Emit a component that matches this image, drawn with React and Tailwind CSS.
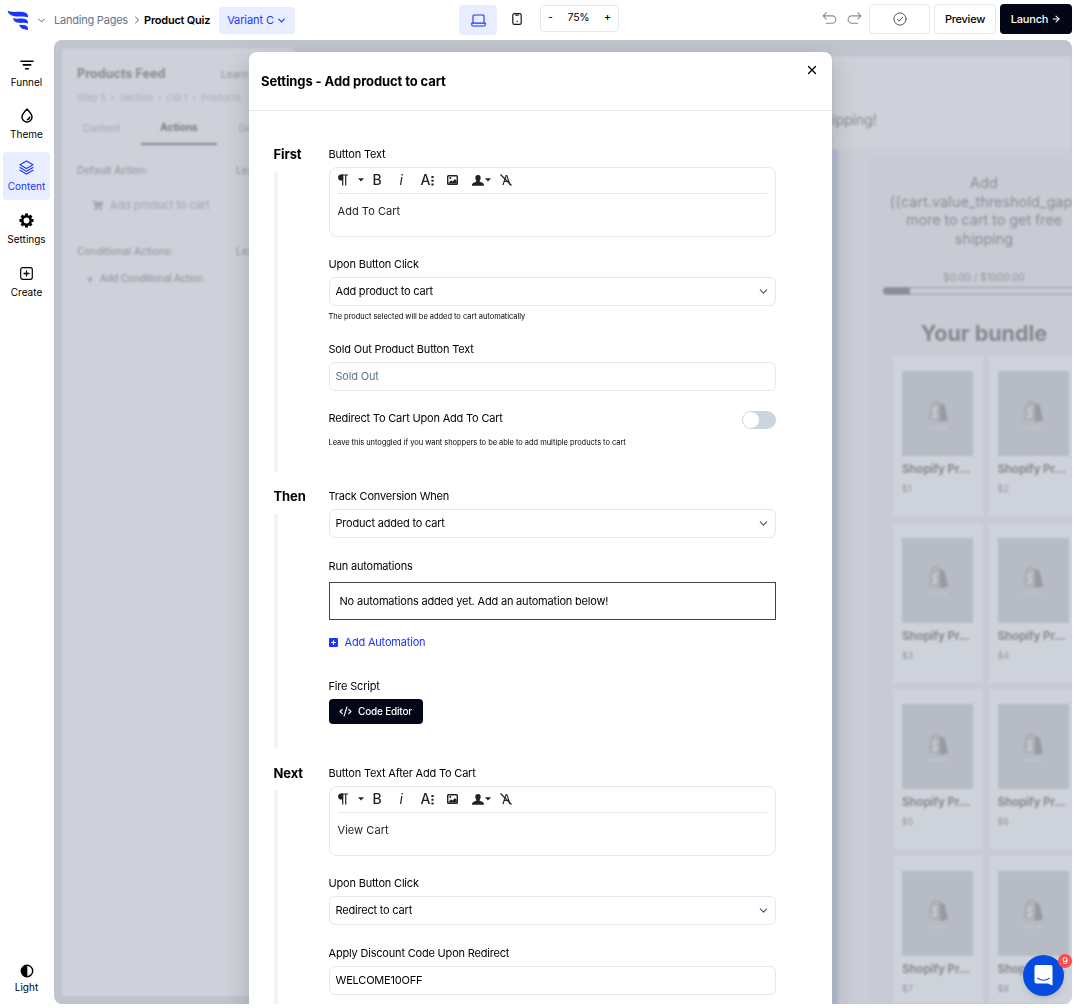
import React from 'react';
import { ChevronDown, ChevronRight, ArrowRight, X, CodeXml } from 'lucide-react';
import { PiArrowUUpLeft, PiArrowUUpRight } from 'react-icons/pi';
import { FaShoppingCart } from 'react-icons/fa';

const Logo = () => (
    <svg width="22" height="21" viewBox="0 0 22 21" fill="#1a35ff">
        <path d="M0.6 0.6C4 2.6 9 1.6 14 1.8C19 2 21.4 4 21 7.2C17 5.6 12 7 7.500 6.300C3.500 5.600 1 3.800 0.600 0.600Z" />
        <path d="M6 8C9 9.200 12 8.300 15.500 8.600C19.500 9 21.400 10.800 21 13.500C18 12 15 13.300 11.500 12.800C8 12.300 6.300 10.500 6 8Z" />
        <path d="M12.300 14.600C14.500 15.400 16 14.800 18 15.200C20.500 15.800 21.400 17.500 21 20.200C19.500 19 18 19.400 16 18.900C13.800 18.300 12.500 16.800 12.300 14.600Z" />
    </svg>
);

const FunnelIcon = () => (
    <svg width="14" height="10" viewBox="0 0 14 10" className="mt-[3px]" stroke="currentColor" strokeWidth="1.600" strokeLinecap="round">
        <path d="M1 1.200H13M3.300 4.900H10.700M5.600 8.700H8.400" />
    </svg>
);

const DropIcon = () => (
    <svg width="12" height="15" viewBox="0 0 12 15" fill="none" stroke="currentColor" strokeWidth="1.500" strokeLinecap="round" strokeLinejoin="round">
        <path d="M6 1C3.500 3.600 1 6.200 1 9A5 5 0 0 0 11 9C11 6.200 8.500 3.600 6 1Z" />
        <path d="M8.700 9.200A2.700 2.700 0 0 1 6.500 11.500" />
    </svg>
);

const LayersIcon = () => (
    <svg width="15" height="15" viewBox="0 0 15 15" fill="none" stroke="currentColor" strokeWidth="1.100" strokeLinecap="round" strokeLinejoin="round">
        <path d="M7.500 1L14 4.700L7.500 8.400L1 4.700Z" />
        <path d="M1 7.500L7.500 11.200L14 7.500M1 10.300L7.500 14L14 10.300" />
    </svg>
);

const GearIcon = () => (
    <svg width="15" height="15" viewBox="0 0 15 15" stroke="currentColor" fill="none">
        <circle cx="7.500" cy="7.500" r="4.200" strokeWidth="2.600" />
        {[0, 45, 90, 135].map((a) => (
            <path key={a} d="M7.500 0.500V2.500M7.500 12.500V14.500" strokeWidth="3" transform={`rotate(${a} 7.5 7.5)`} />
        ))}
    </svg>
);

const CreateIcon = () => (
    <svg width="13" height="13" viewBox="0 0 13 13" fill="none" stroke="currentColor" strokeLinecap="round">
        <rect x="0.700" y="0.700" width="11.600" height="11.600" rx="2" strokeWidth="1.200" />
        <path d="M6.500 4V9M4 6.500H9" strokeWidth="1.300" />
    </svg>
);

const HalfIcon = () => (
    <svg width="14" height="14" viewBox="0 0 14 14">
        <circle cx="7" cy="7" r="5.700" fill="none" stroke="currentColor" strokeWidth="1.400" />
        <path d="M7.300 1A6 6 0 0 0 7.300 13Z" fill="currentColor" />
    </svg>
);

const LaptopIcon = () => (
    <svg width="15" height="13" viewBox="0 0 15 13" fill="none" stroke="currentColor" strokeWidth="1.100" strokeLinejoin="round">
        <path d="M2 9V2Q2 1 3 1H12Q13 1 13 2V9M0.700 9.100H14.300V10.500Q14.300 12 12.800 12H2.200Q0.700 12 0.700 10.500Z" />
    </svg>
);

const PhoneIcon = () => (
    <svg width="10" height="12" viewBox="0 0 10 12" fill="none" stroke="#171717" strokeWidth="1.200">
        <rect x="0.800" y="0.700" width="8.400" height="10.600" rx="1.600" />
        <path d="M3.300 2.200H6.700M4.500 8.300H5.700" />
    </svg>
);

const CheckIcon = () => (
    <svg width="14" height="14" viewBox="0 0 14 14" fill="none" stroke="#555" strokeWidth="1" strokeLinecap="round" strokeLinejoin="round">
        <circle cx="7" cy="7" r="6.100" />
        <path d="M4.300 7.200L6.200 9L9.800 5.200" />
    </svg>
);

const BagIcon = () => (
    <svg width="20" height="23" viewBox="0 0 20 23" fill="none">
        <path d="M1.500 5.500L12 3V22L0 19.500Z" fill="#adb1b9" />
        <path d="M12 3L16.500 5L20 20.500L12 22Z" fill="#969aa2" />
        <path d="M4 5C5 0.500 9.500 0 11.500 4" stroke="#a1a5ad" strokeWidth="1.300" />
        <path d="M9.500 8.500C6.500 7.500 4.500 9.500 6 11.500C7.500 13.200 9 14 8 16C7.200 17.200 5.500 17 4 16" stroke="#cdd0d7" strokeWidth="2" />
    </svg>
);

const Caret = () => (
    <svg width="6" height="4" viewBox="0 0 6 4" fill="#222"><path d="M0 0.300H6L3 3.500Z" /></svg>
);

const navItems = [
    { label: 'Funnel', icon: <FunnelIcon />, box: 'h-[52px]', active: false },
    { label: 'Theme', icon: <DropIcon />, box: 'h-[52px]', active: false },
    { label: 'Content', icon: <LayersIcon />, box: 'h-[53px]', active: true },
    { label: 'Settings', icon: <GearIcon />, box: 'h-[53px]', active: false },
    { label: 'Create', icon: <CreateIcon />, box: 'h-[52px]', active: false },
];

const Header = () => (
    <header className="flex h-10 shrink-0 items-start">
        <div className="flex h-10 w-[459px] items-center pl-[7px]">
            <Logo />
            <ChevronDown size={11} strokeWidth={2} className="ml-[7px] text-slate-600" />
            <span className="ml-[7px] w-[75px] whitespace-nowrap text-[11px] tracking-[-0.22px] text-slate-500">Landing Pages</span>
            <ChevronRight size={12} className="mx-0.5 text-slate-600" />
            <span className="-ml-px w-[67px] whitespace-nowrap text-[11px] font-semibold tracking-[-0.22px] text-black">Product Quiz</span>
            <button className="ml-2 flex h-[27px] w-[76px] items-center justify-center gap-[2px] whitespace-nowrap rounded bg-[#e8edff] text-[11px] tracking-[-0.1px] text-[#1a35ff]">
                Variant C <ChevronDown size={11} strokeWidth={2.6} />
            </button>
        </div>
        <div className="flex items-start pt-[5px]">
            <div className="flex h-[30px] w-[38px] items-center justify-center rounded bg-[#e8edff] text-[#1a35ff]"><LaptopIcon /></div>
            <div className="flex h-7 w-[39px] items-center justify-center"><PhoneIcon /></div>
            <div className="ml-1 flex h-[27px] w-[79px] items-center justify-between rounded border border-slate-200 px-[7px] pb-px text-[10.5px] text-black">
                <span>-</span><span className="tracking-[-0.3px]">75%</span><span className="font-medium">+</span>
            </div>
        </div>
        <div className="ml-auto flex items-start pr-2 pt-1">
            <div className="mr-1.5 flex h-7 items-center gap-2 text-[#8b8b8b]">
                <PiArrowUUpLeft size={17} />
                <PiArrowUUpRight size={17} />
            </div>
            <div className="flex h-[30px] w-[61px] items-center justify-center rounded border border-slate-200"><CheckIcon /></div>
            <button className="ml-1 flex h-[30px] w-[62px] items-center justify-center rounded border border-slate-200 text-[11px] font-medium tracking-[-0.25px] text-black">Preview</button>
            <button className="ml-1 flex h-[30px] w-[72px] items-center justify-center gap-[3px] rounded bg-[#020617] text-[11px] font-medium tracking-[-0.2px] text-white">
                Launch <ArrowRight size={10} strokeWidth={2.6} />
            </button>
        </div>
    </header>
);

const Sidebar = () => (
    <nav className="flex w-[54px] shrink-0 flex-col items-center pr-px pt-2">
        {navItems.map((item) => (
            <div key={item.label} className={`${item.box} flex shrink-0 flex-col items-center`}>
                <div className={`flex h-12 w-[47px] flex-col items-center rounded pt-2 text-[10px] ${item.active ? 'bg-[#e8edff] text-[#1a35ff]' : 'text-black'}`}>
                    <span className="flex h-[15px] items-center justify-center">{item.icon}</span>
                    <span className="mt-1 leading-[15px]">{item.label}</span>
                </div>
            </div>
        ))}
        <div className="mb-[9px] mt-auto flex flex-col items-center text-[10px] text-black">
            <HalfIcon />
            <span className="mt-px leading-4">Light</span>
        </div>
    </nav>
);

const FeedPanel = () => (
    <div className="ml-2 mt-2 flex h-[948px] w-[232px] flex-col overflow-hidden rounded bg-[#ced1d9] text-[10px] text-[#969aa2] blur-[1.3px]">
        <div className="flex h-[51px] items-center whitespace-nowrap pl-[15px] pt-0.5">
            <span className="w-36 text-[12.6px] font-bold text-[#85888f]">Products Feed</span>
            <span className="text-[10px] font-medium">Learn More</span>
        </div>
        <div className="-mt-2 flex h-[14px] items-center gap-[4.800px] whitespace-nowrap pl-[15px] text-[9.5px] text-[#a8adb7]">
            <span>Step 5</span><span>›</span><span>Section</span><span>›</span><span>Col 1</span><span>›</span><span>Products</span>
        </div>
        <div className="mt-[6px] flex h-[35px] shrink-0 border-y border-[#c8ccd4] font-medium text-[#a8adb7]">
            <span className="flex w-[79px] items-center justify-center">Content</span>
            <span className="flex w-[76px] items-center justify-center border-b-2 border-[#85888f] font-bold text-[#777b82]">Actions</span>
            <span className="flex w-[77px] items-center justify-center">Design</span>
        </div>
        <div className="mt-4 flex h-4 items-center whitespace-nowrap pl-[15px] font-medium"><span className="w-[159px]">Default Action:</span>Learn</div>
        <div className="ml-[15px] mt-3 flex h-[30px] w-[214px] items-center border border-[#c8ccd4] pl-3.5 text-[11px] tracking-[-0.1px] text-[#a0a5af]">
            <FaShoppingCart size={11} className="mr-[7px]" />Add product to cart
        </div>
        <div className="mt-[23px] flex h-4 items-center whitespace-nowrap pl-[15px] font-medium"><span className="w-[159px]">Conditional Actions:</span>Learn</div>
        <div className="ml-[15px] mt-[7px] flex h-[25px] w-[134px] items-center whitespace-nowrap rounded border border-[#c8ccd4] pl-2 font-medium tracking-[-0.3px]">
            <span className="mr-1.5 text-xs">+</span>Add Conditional Action
        </div>
    </div>
);

const ProductCard = ({ price }) => (
    <div className="h-40 w-[89.5px] shrink-0 bg-[#ced2da] px-[9px] pt-[15px]">
        <div className="flex h-[85px] w-[71px] flex-col items-center justify-center bg-[#b7bbc4]">
            <BagIcon />
            <div className="mt-1 h-px w-[18px] bg-[#c8ccd3]" />
        </div>
        <p className="mt-[5px] whitespace-nowrap text-[11.5px] font-bold leading-4 tracking-[-0.1px] text-[#888b92]">Shopify Pr...</p>
        <p className="mt-1 text-[9px] leading-4 text-[#92969e]">${price}</p>
    </div>
);

const Preview = () => (
    <div className="mt-4 flex h-[948px] w-[240px] shrink-0 flex-col bg-[#ced1d9] blur-[1.2px]">
        <div className="flex h-[93px] items-center pt-[34px] text-[14px] text-[#8a8e95]"><span className="whitespace-nowrap">ipping!</span></div>
        <div className="flex h-[855px] border-l-[6px] border-[#b4bfd8] bg-[#cacdd5] pl-[31px] pt-2">
            <div className="h-[847px] w-[230px] shrink-0 overflow-hidden bg-[#c8cbd3]">
                <div className="h-[110px] pt-[17px] text-center text-[14.5px] leading-[18.5px] text-[#8a8e96]">
                    <p>Add</p>
                    <p className="whitespace-nowrap">{'({cart.value_threshold_gap}'}</p>
                    <p className="tracking-[-0.1px]">more to cart to get free</p>
                    <p>shipping</p>
                </div>
                <p className="h-5 text-center text-[10px] leading-5 text-[#92969e]">$0.00 / $1000.00</p>
                <div className="ml-[14px] h-2 w-[200px] rounded-sm border-y border-[#959aa3] bg-[#c8cbd3]"><div className="h-full w-[27px] rounded-l-sm bg-[#8a8e97]" /></div>
                <p className="h-[61px] pt-[23px] text-center text-[21.5px] font-bold leading-[31px] text-[#858890]">Your bundle</p>
                <div className="ml-6 grid w-[186px] grid-cols-[89.5px_89.5px] gap-x-1.5 gap-y-[6.500px]">
                    {[1, 2, 3, 4, 5, 6, 7, 8].map((p) => <ProductCard key={p} price={p} />)}
                </div>
            </div>
        </div>
    </div>
);

const Toolbar = () => (
    <div className="mx-2 flex h-[26px] shrink-0 items-center border-b border-slate-200 pb-px text-[#222]">
        <svg width="10" height="12" viewBox="0 0 10 12" className="mr-2.5" fill="none" stroke="#222" strokeWidth="1.200">
            <path d="M4.500 1H3.200A2.500 2.500 0 0 0 3.200 6H4.500Z" fill="#222" />
            <path d="M3 1H10M4.700 1V11.500M7.700 1V11.500" />
        </svg>
        <Caret />
        <span className="ml-[9px] w-[27px] text-[14px] font-medium leading-4">B</span>
        <span className="w-[21px] text-[14px] italic leading-4">i</span>
        <span className="text-[14px] font-medium leading-4">A</span>
        <svg width="3" height="11" viewBox="0 0 3 11" className="ml-px mr-[13px]" fill="#222"><path d="M0.400 1H2.600V3H0.400ZM0.400 4.800H2.600V6.800H0.400ZM0.400 8.600H2.600V10.600H0.400Z" /></svg>
        <svg width="11" height="10" viewBox="0 0 11 10" className="mr-3.5">
            <rect x="0.700" y="0.700" width="9.600" height="8.600" rx="0.800" fill="none" stroke="#222" strokeWidth="1.400" />
            <path d="M1.500 8L4 5.200L5.500 6.500L8 4L9.700 6V8.500H1.500Z" fill="#222" />
            <circle cx="3.300" cy="3" r="1" fill="#222" />
        </svg>
        <svg width="12" height="11" viewBox="0 0 11 10" className="mr-px" fill="#222">
            <path d="M5.500 0C7.500 0 8.200 1.400 7.900 3.200C7.700 4.500 7 5 6.900 6C8.500 7 11 7 11 9.700H0C0 7 2.500 7 4.100 6C4 5 3.300 4.500 3.100 3.200C2.800 1.400 3.500 0 5.500 0Z" />
        </svg>
        <Caret />
        <span className="relative ml-[9px] flex h-4 w-3 items-center justify-center text-[13px] leading-4">
            A
            <svg width="12" height="12" viewBox="0 0 12 12" className="absolute left-0 top-0.5" stroke="#222" strokeWidth="1.200"><path d="M0.500 0.500L11.500 11.500" /></svg>
        </span>
    </div>
);

const Editor = ({ text }) => (
    <div className="mt-[5px] flex h-[70px] shrink-0 flex-col rounded-lg border border-slate-200">
        <Toolbar />
        <p className="px-2 pt-[9px] text-[11px] leading-4 tracking-[0.05px] text-[#222]">{text}</p>
    </div>
);

const Select = ({ value }) => (
    <div className="mt-[5px] flex h-[29px] shrink-0 items-center justify-between rounded-md border border-slate-200 px-1.5 text-[11px] tracking-[-0.2px] text-black">
        {value}
        <ChevronDown size={13} strokeWidth={2} className="-mr-px text-slate-600" />
    </div>
);

const Label = ({ children, className = '' }) => (
    <p className={`h-4 shrink-0 whitespace-nowrap text-[11px] leading-4 tracking-[-0.19px] text-black ${className}`}>{children}</p>
);

const Section = ({ title, height, children }) => (
    <section className={`${height} flex shrink-0`}>
        <div className="flex w-[55px] shrink-0 flex-col">
            <h3 className="h-4 text-[13px] font-bold leading-4 tracking-[-0.1px] text-black">{title}</h3>
            <div className="mb-4 mt-[9px] w-1 flex-1 rounded-sm bg-slate-100" />
        </div>
        <div className="flex w-[447.5px] flex-col">{children}</div>
    </section>
);

const SettingsModal = () => (
    <div className="absolute left-[248.5px] top-[52px] flex h-[952px] w-[583px] flex-col overflow-hidden rounded-t-lg bg-white">
        <div className="flex h-[59px] shrink-0 items-center justify-between border-b border-slate-200 pl-[12.5px] pr-[13px]">
            <h2 className="pt-0.5 text-[13px] font-bold tracking-[-0.1px] text-black">Settings - Add product to cart</h2>
            <X size={14} strokeWidth={2.4} className="-mt-[22px] text-black" />
        </div>
        <div className="flex flex-col pl-[25px] pt-[35px]">
            <Section title="First" height="h-[342px]">
                <Label>Button Text</Label>
                <Editor text="Add To Cart" />
                <Label className="mt-[19px]">Upon Button Click</Label>
                <Select value="Add product to cart" />
                <p className="mt-[5px] h-3 text-[7.500px] leading-3 tracking-[-0.04px] text-black">The product selected will be added to cart automatically</p>
                <Label className="mt-[18px]">Sold Out Product Button Text</Label>
                <div className="mt-[5px] flex h-[29px] items-center rounded-md border border-slate-200 px-1.5 text-[11px] tracking-[-0.19px] text-slate-500">Sold Out</div>
                <div className="mt-[19px] flex h-5 items-start justify-between">
                    <Label>Redirect To Cart Upon Add To Cart</Label>
                    <div className="mt-px flex h-[18px] w-[34px] items-center rounded-full bg-slate-300 p-px"><div className="h-4 w-4 rounded-full bg-white" /></div>
                </div>
                <p className="mt-[7px] h-3 text-[7.500px] leading-3 tracking-[-0.04px] text-black">Leave this untoggled if you want shoppers to be able to add multiple products to cart</p>
            </Section>
            <Section title="Then" height="h-[277px]">
                <Label>Track Conversion When</Label>
                <Select value="Product added to cart" />
                <Label className="mt-5">Run automations</Label>
                <div className="mt-2 flex h-[38px] items-center border border-[#444] px-2.5 text-[11px] tracking-[-0.19px] text-black">No automations added yet. Add an automation below!</div>
                <div className="mt-[14px] flex h-4 items-center text-[11px] tracking-[-0.19px] text-[#1a35ff]">
                    <svg width="9" height="9" viewBox="0 0 9 9" className="mr-[7px]"><rect width="9" height="9" rx="1" fill="#1a35ff" /><path d="M4.500 2.200V6.800M2.200 4.500H6.800" stroke="white" strokeWidth="1.100" /></svg>
                    Add Automation
                </div>
                <Label className="mt-7">Fire Script</Label>
                <button className="mt-[5px] flex h-[25px] w-[94px] items-center justify-center gap-1.5 whitespace-nowrap rounded bg-[#020617] text-[10px] font-medium tracking-[-0.2px] text-white">
                    <CodeXml size={13} strokeWidth={2.2} /> Code Editor
                </button>
            </Section>
            <Section title="Next" height="h-[420px]">
                <Label>Button Text After Add To Cart</Label>
                <Editor text="View Cart" />
                <Label className="mt-[19px]">Upon Button Click</Label>
                <Select value="Redirect to cart" />
                <Label className="mt-5">Apply Discount Code Upon Redirect</Label>
                <div className="mt-[5px] flex h-[29px] items-center rounded-md border border-slate-200 px-1.5 text-[11px] tracking-[-0.19px] text-black">WELCOME10OFF</div>
            </Section>
        </div>
    </div>
);

const ChatLauncher = () => (
    <div className="absolute left-[1023px] top-[955px] flex h-[41px] w-[41px] items-center justify-center rounded-full bg-[#064ddf] shadow-md">
        <svg width="19" height="21" viewBox="0 0 19 21">
            <path d="M2.500 0H16.500Q18.500 0 18.500 2V20.500L13.800 18.500H2.500Q0.500 18.500 0.500 16.500V2Q0.500 0 2.500 0Z" fill="white" />
            <path d="M3.700 13.300Q9.500 17.300 15.300 13.300" fill="none" stroke="#064ddf" strokeWidth="1.100" strokeLinecap="round" />
        </svg>
        <span className="absolute -right-2 -top-px flex h-[14px] w-[14px] items-center justify-center rounded-full bg-[#ff4b4b] text-[9px] font-medium text-white">9</span>
    </div>
);

const App = () => (
    <div className="relative flex h-[1008px] w-[1080px] flex-col overflow-hidden bg-white font-['Inter',sans-serif]">
        <Header />
        <div className="flex h-[964px] shrink-0">
            <Sidebar />
            <main className="flex w-[1018px] justify-between overflow-hidden rounded-lg bg-[#bfc4cd]">
                <FeedPanel />
                <Preview />
            </main>
        </div>
        <div className="absolute left-[54px] top-10 h-[964px] w-[1018px] overflow-hidden rounded-lg">
            <div className="absolute left-[195px] top-3 h-[1000px] w-[583px] rounded-lg shadow-[0_10px_24px_rgba(90,90,80,0.32)]" />
        </div>
        <SettingsModal />
        <ChatLauncher />
    </div>
);

export default App;
